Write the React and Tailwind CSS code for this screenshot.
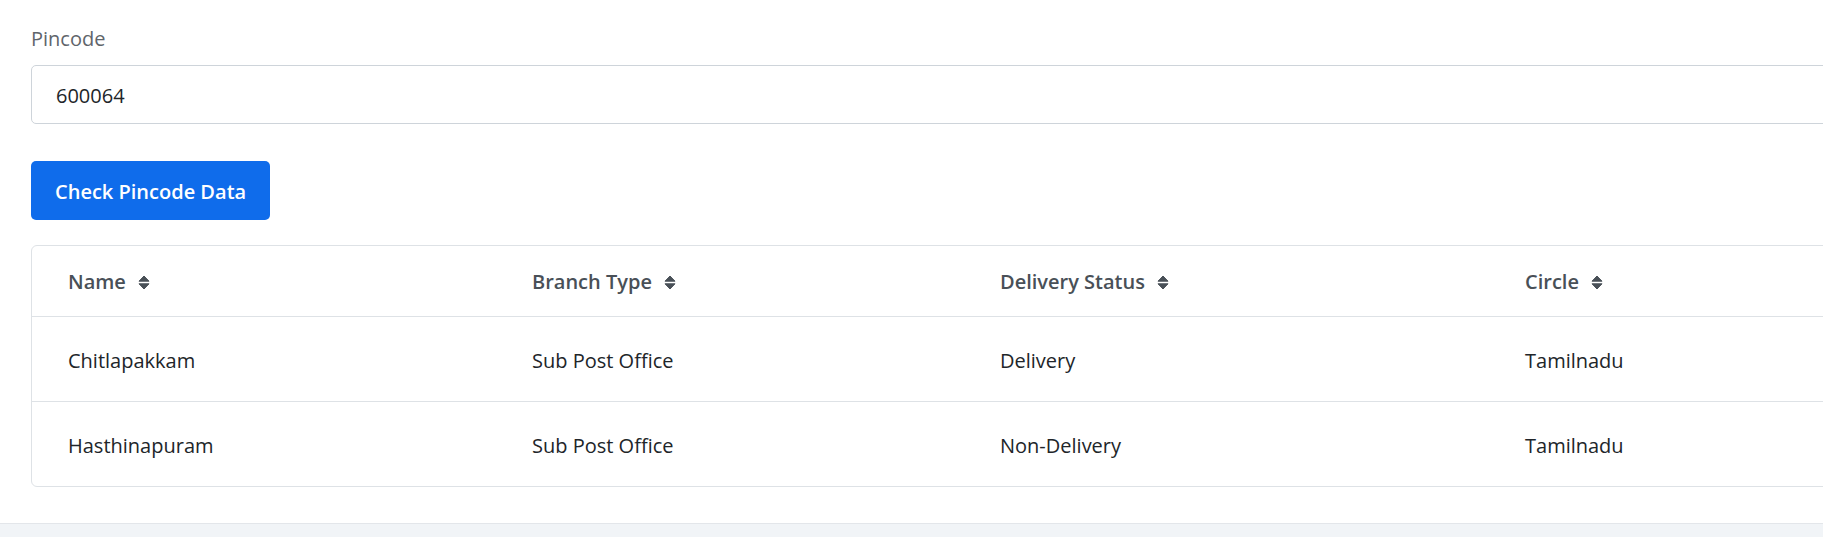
import { useState } from 'react';

const COLUMNS = [
  { key: 'name', label: 'Name' },
  { key: 'branchType', label: 'Branch Type' },
  { key: 'deliveryStatus', label: 'Delivery Status' },
  { key: 'circle', label: 'Circle' },
];

const ROWS = [
  { name: 'Chitlapakkam', branchType: 'Sub Post Office', deliveryStatus: 'Delivery', circle: 'Tamilnadu' },
  { name: 'Hasthinapuram', branchType: 'Sub Post Office', deliveryStatus: 'Non-Delivery', circle: 'Tamilnadu' },
];

// fixed column widths so the headers land where the reference has them
const GRID = 'grid grid-cols-[464px_468px_525px_1fr]';

function SortIcon() {
  return (
    <svg width="12" height="15" viewBox="0 0 12 15" className="shrink-0">
      <path d="M6 1 L11 6.2 H1 Z" fill="#495057" stroke="#495057" strokeWidth="1" strokeLinejoin="round" />
      <path d="M1 8.8 H11 L6 14 Z" fill="#495057" stroke="#495057" strokeWidth="1" strokeLinejoin="round" />
    </svg>
  );
}

export default function App() {
  const [pincode, setPincode] = useState('600064');

  return (
    <div className="w-full overflow-hidden bg-white font-['Open_Sans','Noto_Sans',sans-serif]">
      <div className="w-[1860px] pl-[31px] pr-[31px] pt-[24px] pb-[36px]">
        <label className="block h-[30px] leading-[30px] text-[20px] text-[#5f656b] mb-[11px]">Pincode</label>
        <input
          type="text"
          value={pincode}
          onChange={(e) => setPincode(e.target.value)}
          className="block w-full h-[59px] px-[24px] pt-[2px] text-[20px] text-[#212529] border border-[#ced4da] rounded-[5px] outline-none"
        />

        <button className="mt-[37px] h-[59px] px-[24px] pt-[2px] rounded-[5px] bg-[#0f6ceb] text-white text-[20px] font-semibold">
          Check Pincode Data
        </button>

        <div className="mt-[25px] border border-[#dee2e6] rounded-[6px] overflow-hidden">
          <div className={`${GRID} h-[71px] border-b border-[#dee2e6]`}>
            {COLUMNS.map((col) => (
              <div key={col.key} className="flex items-center gap-[12px] pl-[36px] pt-[2px] text-[20px] font-semibold text-[#495057]">
                <span>{col.label}</span>
                <SortIcon />
              </div>
            ))}
          </div>
          {ROWS.map((row, i) => (
            <div
              key={row.name}
              className={`${GRID} ${i < ROWS.length - 1 ? 'h-[85px] border-b border-[#dee2e6]' : 'h-[84px]'}`}
            >
              {COLUMNS.map((col) => (
                <div key={col.key} className="flex items-center pl-[36px] pt-[3px] text-[20px] text-[#212529]">
                  {row[col.key]}
                </div>
              ))}
            </div>
          ))}
        </div>
      </div>
      <div className="h-[20px] bg-[#f1f4f7] border-t border-[#e3e6ea]" />
    </div>
  );
}
